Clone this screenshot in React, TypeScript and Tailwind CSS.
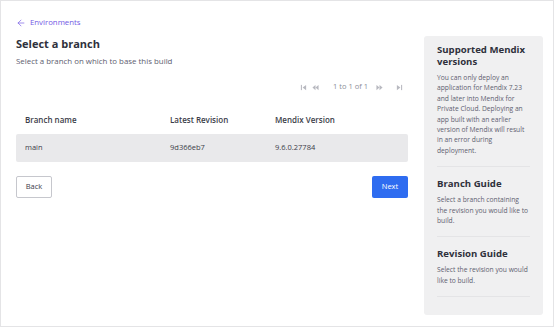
import React from 'react';
import { ArrowLeft } from 'lucide-react';

const rows = [{ name: 'main', revision: '9d366eb7', version: '9.6.0.27784' }];

const guides = [
  {
    title: 'Supported Mendix versions',
    text: 'You can only deploy an application for Mendix 7.23 and later into Mendix for Private Cloud. Deploying an app built with an earlier version of Mendix will result in an error during deployment.',
  },
  {
    title: 'Branch Guide',
    text: 'Select a branch containing the revision you would like to build.',
  },
  {
    title: 'Revision Guide',
    text: 'Select the revision you would like to build.',
  },
];

const PagerIcon = ({ kind }: { kind: 'first' | 'prev' | 'next' | 'last' }) => {
  const flip = kind === 'next' || kind === 'last';
  return (
    <svg width="7" height="7" viewBox="0 0 8 8" className={flip ? 'scale-x-[-1]' : ''}>
      {kind === 'first' || kind === 'last' ? (
        <>
          <rect x="1" y="1" width="1.2" height="6" fill="#b8b9c0" />
          <path d="M7 1 L3 4 L7 7 Z" fill="#b8b9c0" />
        </>
      ) : (
        <>
          <path d="M4 1 L0.5 4 L4 7 Z" fill="#b8b9c0" />
          <path d="M7.5 1 L4 4 L7.5 7 Z" fill="#b8b9c0" />
        </>
      )}
    </svg>
  );
};

export default function App() {
  return (
    <div
      className="flex w-[554px] h-[327px] border border-[#e4e4e6] bg-white text-[#3b3d48]"
      style={{ fontFamily: '"Open Sans", "Noto Sans", sans-serif' }}
    >
      <main className="flex-1 pl-[15px] pr-[16px] pt-[15px]">
        <a className="flex items-center gap-[4px] text-[7.8px] text-[#7258e4] h-[14px]">
          <ArrowLeft size={10} strokeWidth={1.6} />
          <span>Environments</span>
        </a>
        <h1 className="mt-[5px] text-[11px] leading-[18px] font-bold text-[#2f313c]">Select a branch</h1>
        <p className="mt-[2px] text-[7.9px] leading-[12px] text-[#5e6070]">Select a branch on which to base this build</p>

        <div className="mt-[14px] flex items-center justify-end pr-[5px] text-[7.5px] text-[#8c8e99] h-[12px]">
          <PagerIcon kind="first" />
          <span className="ml-[5px]"><PagerIcon kind="prev" /></span>
          <span className="ml-[14px]">1 to 1 of 1</span>
          <span className="ml-[8px]"><PagerIcon kind="next" /></span>
          <span className="ml-[13px]"><PagerIcon kind="last" /></span>
        </div>

        <table className="mt-[13px] w-full text-[7.5px]">
          <thead>
            <tr className="h-[28px] text-[8px] text-[#3b3d48]">
              <th className="pl-[9px] text-left font-semibold w-[154px]">Branch name</th>
              <th className="text-left font-semibold w-[105px]">Latest Revision</th>
              <th className="text-left font-semibold">Mendix Version</th>
            </tr>
          </thead>
          <tbody>
            {rows.map((r) => (
              <tr key={r.name} className="h-[28px] bg-[#e9e9eb]">
                <td className="pl-[9px] rounded-l-[2px]">{r.name}</td>
                <td>{r.revision}</td>
                <td className="rounded-r-[2px]">{r.version}</td>
              </tr>
            ))}
          </tbody>
        </table>

        <div className="mt-[14px] flex justify-between">
          <button className="h-[22px] w-[36px] rounded-[2px] border border-[#c6c7cd] bg-white text-[7.5px] text-[#3b3d48]">
            Back
          </button>
          <button className="h-[22px] w-[36px] rounded-[2px] bg-[#2e6cf0] text-[7.5px] text-white">
            Next
          </button>
        </div>
      </main>

      <aside className="mt-[35px] mr-[10px] mb-[11px] w-[119px] rounded-[3px] bg-[#f0f0f1] px-[13px] pt-[8px]">
        {guides.map((g) => (
          <section key={g.title} className="border-b border-[#e4e4e6] pb-[10px] mb-[11px]">
            <h2 className="text-[9.6px] leading-[12px] font-bold text-[#2f313c]">{g.title}</h2>
            <p className="mt-[5px] text-[6.7px] leading-[10.4px] text-[#5e6070]">{g.text}</p>
          </section>
        ))}
      </aside>
    </div>
  );
}
